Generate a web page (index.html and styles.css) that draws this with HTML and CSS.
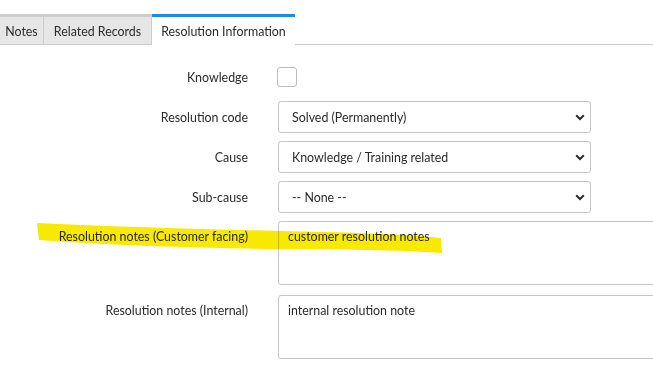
FILE: index.html
```html
<!DOCTYPE html>
<html>
<head>
<meta charset="utf-8">
<link rel="stylesheet" href="styles.css">
</head>
<body>
<div class="page">
  <div class="tabs">
    <div class="tab tab-notes">Notes</div>
    <div class="tab tab-related">Related Records</div>
    <div class="tab tab-active">Resolution Information</div>
    <div class="tab-rest"></div>
  </div>
  <div class="form">
    <div class="label row-first">Knowledge</div>
    <div class="ctrl row-first"><div class="checkbox"></div></div>

    <div class="label">Resolution code</div>
    <div class="ctrl"><div class="select"><span>Solved (Permanently)</span><svg class="chev" viewBox="0 0 10 7" width="10" height="7"><path d="M1.2 1.2 L5 5 L8.8 1.2" fill="none" stroke="#2b2b2b" stroke-width="2"/></svg></div></div>

    <div class="label">Cause</div>
    <div class="ctrl"><div class="select"><span>Knowledge / Training related</span><svg class="chev" viewBox="0 0 10 7" width="10" height="7"><path d="M1.2 1.2 L5 5 L8.8 1.2" fill="none" stroke="#2b2b2b" stroke-width="2"/></svg></div></div>

    <div class="label">Sub-cause</div>
    <div class="ctrl"><div class="select"><span>-- None --</span><svg class="chev" viewBox="0 0 10 7" width="10" height="7"><path d="M1.2 1.2 L5 5 L8.8 1.2" fill="none" stroke="#2b2b2b" stroke-width="2"/></svg></div></div>

    <div class="label label-top">Resolution notes (Customer facing)</div>
    <div class="ctrl"><div class="textarea">customer resolution notes</div></div>

    <div class="label label-top">Resolution notes (Internal)</div>
    <div class="ctrl"><div class="textarea">internal resolution note</div></div>
  </div>
  <svg class="highlight" viewBox="0 0 653 369" width="653" height="369">
    <path d="M37 223 C 120 227, 200 229, 280 231 C 340 232, 400 234, 441 238 L 442 253 C 400 250, 340 249, 280 249 C 200 248, 120 246, 39 240 Z" fill="#f7ea00"/>
  </svg>
</div>
</body>
</html>
```
FILE: styles.css
```css
html, body {
  margin: 0;
  padding: 0;
  background: #fff;
  overflow: hidden;
}
body {
  font-family: Lato, "Open Sans", sans-serif;
  font-size: 12.4px;
  color: #2b2b2b;
}
.page {
  position: relative;
  width: 653px;
  height: 369px;
  overflow: hidden;
}
.tabs {
  display: flex;
  margin-top: 14px;
  height: 31px;
}
.tab {
  box-sizing: border-box;
  height: 31px;
  line-height: 29px;
  background: #e6e6e6;
  border-top: 3px solid #cdcdcd;
  border-bottom: 1px solid #cdcdcd;
  border-right: 1px solid #cdcdcd;
  color: #2b2b2b;
  white-space: nowrap;
  text-align: center;
}
.tab-notes { width: 44px; }
.tab-related { width: 108px; }
.tab-active {
  width: 143px;
  background: #fff;
  border-top: 3px solid #1f8ae6;
  border-bottom: 1px solid transparent;
  border-right: none;
}
.tab-rest {
  flex: 1;
  border-bottom: 1px solid #cdcdcd;
}
.form {
  display: grid;
  grid-template-columns: 248px 1fr;
  column-gap: 30px;
  row-gap: 8px;
  padding-top: 22px;
}
.row-first {
  margin-bottom: 6px;
}
.label {
  text-align: right;
  display: flex;
  align-items: center;
  justify-content: flex-end;
  white-space: nowrap;
}
.label-top {
  align-items: flex-start;
  padding-top: 8px;
}
.ctrl {
  display: flex;
}
.checkbox {
  box-sizing: border-box;
  width: 20px;
  height: 20px;
  border: 1px solid #bdbdbd;
  border-radius: 3px;
  margin-left: -1px;
}
.select {
  box-sizing: border-box;
  width: 313px;
  height: 32px;
  border: 1px solid #c6c6c6;
  border-radius: 3px;
  display: flex;
  align-items: center;
  justify-content: space-between;
  padding: 0 5px 0 13px;
}
.chev {
  display: block;
}
.textarea {
  box-sizing: border-box;
  width: 420px;
  height: 64px;
  border: 1px solid #c6c6c6;
  border-radius: 3px;
  padding: 7px 9px;
  margin-bottom: 2px;
}
.highlight {
  position: absolute;
  left: 0;
  top: 0;
  mix-blend-mode: multiply;
  pointer-events: none;
}
```
